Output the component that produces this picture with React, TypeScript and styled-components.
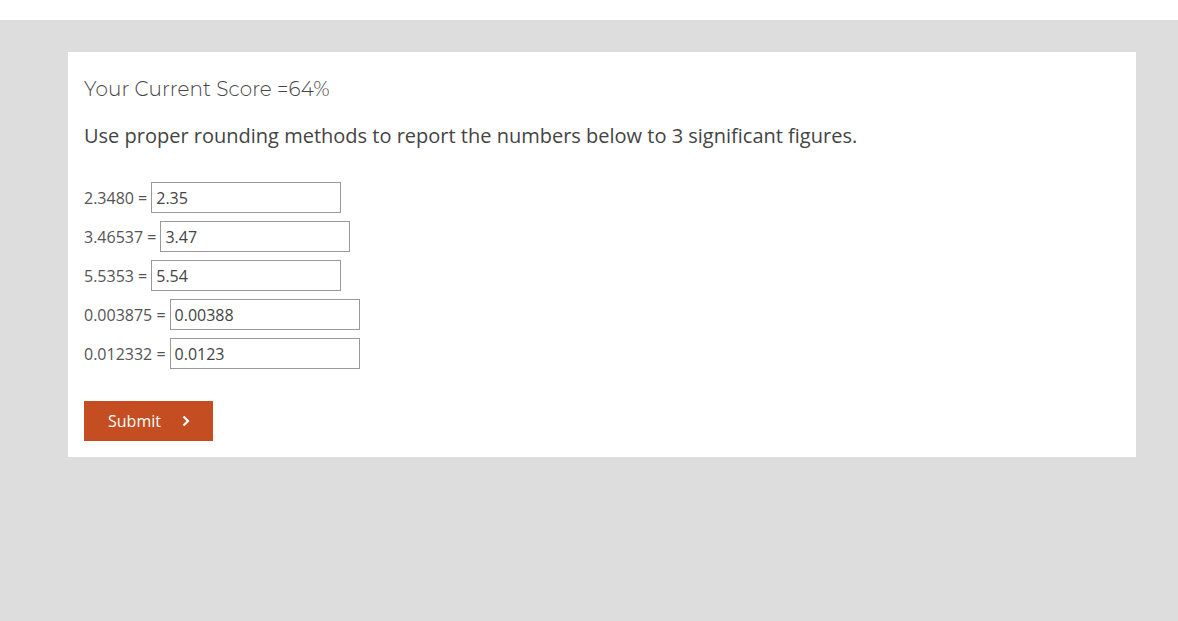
import * as React from 'react'
import styled, { createGlobalStyle } from 'styled-components'

const GlobalStyle = createGlobalStyle`
  html, body { margin: 0; padding: 0; }
  body {
    background: #dddddd;
    font-family: "Open Sans", "Liberation Sans", sans-serif;
    color: #444;
  }
  * { box-sizing: border-box; }
`

const TopBar = styled.div`
  height: 20px;
  background: #fff;
`

const Page = styled.div`
  min-height: 601px;
  padding: 32px 42px 32px 68px;
`

const Card = styled.div`
  background: #fff;
  padding: 16px;
`

const Score = styled.h2`
  margin: 7px 0 0;
  font-family: "Montserrat", "Lato", "Open Sans", sans-serif;
  font-weight: 300;
  font-size: 20px;
  letter-spacing: 0.1px;
  line-height: 28px;
  color: #444;
`

const Instruction = styled.p`
  margin: 19px 0 0;
  font-size: 20px;
  line-height: 28px;
  color: #444;
`

const Rows = styled.div`
  display: flex;
  flex-direction: column;
  gap: 8px;
  margin-top: 32px;
`

const Row = styled.label`
  display: flex;
  align-items: center;
  font-size: 16px;
  color: #555;
`

const Answer = styled.input`
  margin-left: 4px;
  width: 190px;
  height: 31px;
  border: 1px solid #999;
  padding: 0 4px;
  font-family: "Open Sans", "Liberation Sans", sans-serif;
  font-size: 16px;
  color: #444;
  outline: none;
`

const SubmitButton = styled.button`
  margin-top: 32px;
  display: inline-flex;
  align-items: center;
  gap: 20px;
  height: 40px;
  padding: 0 22px 0 24px;
  background: #c44d21;
  border: none;
  color: #fff;
  font-family: "Open Sans", "Liberation Sans", sans-serif;
  font-size: 16px;
  cursor: pointer;
`

const questions = [
  { q: '2.3480', a: '2.35' },
  { q: '3.46537', a: '3.47' },
  { q: '5.5353', a: '5.54' },
  { q: '0.003875', a: '0.00388' },
  { q: '0.012332', a: '0.0123' },
]

export default function App() {
  return (
    <>
      <GlobalStyle />
      <TopBar />
      <Page>
        <Card>
          <Score>Your Current Score =64%</Score>
          <Instruction>Use proper rounding methods to report the numbers below to 3 significant figures.</Instruction>
          <Rows>
            {questions.map(item => (
              <Row key={item.q}>
                {item.q} =
                <Answer defaultValue={item.a} />
              </Row>
            ))}
          </Rows>
          <SubmitButton>
            Submit
            <svg width="10" height="12" viewBox="0 0 10 12">
              <path d="M2.5 1.5 L7 6 L2.5 10.5" fill="none" stroke="#fff" strokeWidth="2.2" />
            </svg>
          </SubmitButton>
        </Card>
      </Page>
    </>
  )
}
